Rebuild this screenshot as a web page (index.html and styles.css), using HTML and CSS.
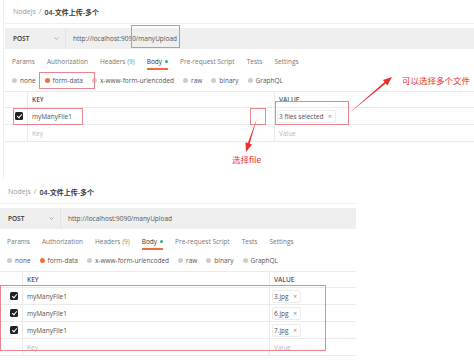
FILE: index.html
```html
<!DOCTYPE html>
<html lang="zh-CN">
<head>
    <meta charset="UTF-8">
    <meta name="viewport" content="width=device-width, initial-scale=1.0">
    <title>04-文件上传-多个</title>
    <link rel="stylesheet" href="styles.css">
</head>
<body>
    <section class="shot shot-first">
        <div class="crumb">
            <span class="crumb-parent">Nodejs</span>
            <span class="crumb-sep">/</span>
            <span class="crumb-name">04-文件上传-多个</span>
        </div>
        <div class="request">
            <div class="method">
                <span>POST</span>
                <svg class="caret" width="5" height="3" viewBox="0 0 5 3"><polyline points="0.5,0.5 2.5,2.5 4.5,0.5" fill="none" stroke="#999" stroke-width="0.8"/></svg>
            </div>
            <div class="url">http://localhost:9090/manyUpload</div>
        </div>
        <nav class="tabs">
            <span class="tab">Params</span>
            <span class="tab">Authorization</span>
            <span class="tab">Headers <span class="count">(9)</span></span>
            <span class="tab tab-active">Body<i class="dot"></i></span>
            <span class="tab">Pre-request Script</span>
            <span class="tab">Tests</span>
            <span class="tab">Settings</span>
        </nav>
        <div class="modes">
            <span class="mode">none</span>
            <span class="mode mode-on">form-data</span>
            <span class="mode">x-www-form-urlencoded</span>
            <span class="mode">raw</span>
            <span class="mode">binary</span>
            <span class="mode">GraphQL</span>
        </div>
        <div class="kv">
            <div class="kv-row kv-head">
                <span class="cell cell-check"></span>
                <span class="cell">KEY</span>
                <span class="cell">VALUE</span>
            </div>
            <div class="kv-row">
                <span class="cell cell-check"><i class="check"></i></span>
                <span class="cell">myManyFile1</span>
                <span class="cell"><span class="chip">3 files selected <b>×</b></span></span>
            </div>
            <div class="kv-row">
                <span class="cell cell-check"></span>
                <span class="cell hint">Key</span>
                <span class="cell hint">Value</span>
            </div>
        </div>
    </section>

    <section class="shot shot-second">
        <div class="crumb">
            <span class="crumb-parent">Nodejs</span>
            <span class="crumb-sep">/</span>
            <span class="crumb-name">04-文件上传-多个</span>
        </div>
        <div class="request">
            <div class="method">
                <span>POST</span>
                <svg class="caret" width="5" height="3" viewBox="0 0 5 3"><polyline points="0.5,0.5 2.5,2.5 4.5,0.5" fill="none" stroke="#999" stroke-width="0.8"/></svg>
            </div>
            <div class="url">http://localhost:9090/manyUpload</div>
        </div>
        <nav class="tabs">
            <span class="tab">Params</span>
            <span class="tab">Authorization</span>
            <span class="tab">Headers <span class="count">(9)</span></span>
            <span class="tab tab-active">Body<i class="dot"></i></span>
            <span class="tab">Pre-request Script</span>
            <span class="tab">Tests</span>
            <span class="tab">Settings</span>
        </nav>
        <div class="modes">
            <span class="mode">none</span>
            <span class="mode mode-on">form-data</span>
            <span class="mode">x-www-form-urlencoded</span>
            <span class="mode">raw</span>
            <span class="mode">binary</span>
            <span class="mode">GraphQL</span>
        </div>
        <div class="kv">
            <div class="kv-row kv-head">
                <span class="cell cell-check"></span>
                <span class="cell">KEY</span>
                <span class="cell">VALUE</span>
            </div>
            <div class="kv-row">
                <span class="cell cell-check"><i class="check"></i></span>
                <span class="cell">myManyFile1</span>
                <span class="cell"><span class="chip">3.jpg <b>×</b></span></span>
            </div>
            <div class="kv-row">
                <span class="cell cell-check"><i class="check"></i></span>
                <span class="cell">myManyFile1</span>
                <span class="cell"><span class="chip">6.jpg <b>×</b></span></span>
            </div>
            <div class="kv-row">
                <span class="cell cell-check"><i class="check"></i></span>
                <span class="cell">myManyFile1</span>
                <span class="cell"><span class="chip">7.jpg <b>×</b></span></span>
            </div>
            <div class="kv-row">
                <span class="cell cell-check"></span>
                <span class="cell hint">Key</span>
                <span class="cell hint">Value</span>
            </div>
        </div>
    </section>

    <!-- annotations drawn over the screenshots -->
    <svg class="marks" width="474" height="361" viewBox="0 0 474 361">
        <g fill="none" stroke="#e9868d" stroke-width="1">
            <rect x="131.5" y="25.5" width="48" height="22"/>
            <rect x="39.5" y="72.5" width="55" height="16"/>
            <rect x="13.5" y="108.5" width="69" height="16"/>
            <rect x="250.5" y="108.5" width="15" height="16"/>
            <rect x="275.5" y="101.5" width="73" height="23"/>
            <rect x="0.5" y="285.5" width="325" height="65"/>
        </g>
        <g fill="#e8302f">
            <polygon points="348,114 385.7,83.5 387.4,85.5 392,77 382.9,80.1 384.5,82.1"/>
            <polygon points="257,118 249.6,143.7 252.1,144.5 246,152 245.5,142.3 247.9,143.1"/>
        </g>
    </svg>
    <div class="note note-many">可以选择多个文件</div>
    <div class="note note-file">选择file</div>
</body>
</html>
```

FILE: styles.css
```css
body {
    margin: 0;
    width: 474px;
    height: 361px;
    position: relative;
    overflow: hidden;
    background: #fff;
    font-family: "Open Sans", "Noto Sans CJK SC", sans-serif;
    font-size: 6.5px;
    color: #505050;
}

.shot {
    height: 180px;
    box-sizing: border-box;
}

.shot-first {
    margin-left: 3px;
    padding-left: 1px;
    border-left: 1px solid #f0f0f0;
}

.shot-second {
    width: 356px;
}

.crumb {
    height: 23px;
    display: flex;
    align-items: center;
    gap: 3px;
    padding-left: 8px;
    border-bottom: 1px solid #f0f0f0;
    font-size: 7px;
}

.crumb-parent,
.crumb-sep {
    color: #999;
}

.crumb-name {
    color: #333;
    font-weight: 600;
}

.request {
    margin-top: 4px;
    height: 21px;
    display: flex;
    align-items: center;
    background: #efefef;
}

.method {
    width: 61px;
    height: 100%;
    display: flex;
    align-items: center;
    justify-content: space-between;
    padding: 0 6px 0 8px;
    box-sizing: border-box;
    border-right: 1px solid #e4e4e4;
    color: #333;
    font-weight: 600;
}

.url {
    padding-left: 7px;
    color: #555;
}

.tabs {
    height: 21px;
    display: flex;
    gap: 12px;
    padding: 7px 0 0 7px;
    box-sizing: border-box;
    color: #777;
}

.tab {
    line-height: 12px;
    border-bottom: 2px solid transparent;
}

.tab-active {
    color: #333;
    border-bottom-color: #f26b3a;
}

.count {
    color: #5aa57d;
}

.dot {
    display: inline-block;
    width: 3px;
    height: 3px;
    margin-left: 3px;
    vertical-align: 1px;
    border-radius: 50%;
    background: #26b47f;
}

.modes {
    height: 16px;
    margin-top: 2px;
    display: flex;
    align-items: center;
    gap: 9px;
    padding-left: 7px;
    color: #555;
}

.mode {
    display: flex;
    align-items: center;
    gap: 3px;
}

.mode::before {
    content: "";
    width: 5px;
    height: 5px;
    border-radius: 50%;
    background: #cdcdcd;
}

.mode-on::before {
    background: #f0703f;
}

.kv {
    margin-top: 3px;
    border-top: 1px solid #ebebeb;
}

.kv-row {
    height: 17px;
    display: grid;
    grid-template-columns: 22px 247px 1fr;
    box-sizing: border-box;
    border-bottom: 1px solid #ebebeb;
}

.kv-head {
    height: 16px;
    color: #555;
    font-weight: 600;
}

.cell {
    display: flex;
    align-items: center;
    padding-left: 4px;
    border-left: 1px solid #ebebeb;
}

.cell-check {
    padding-left: 10px;
    border-left: none;
}

.check {
    width: 8px;
    height: 8px;
    border-radius: 1.5px;
    background: #222;
    position: relative;
}

.check::after {
    content: "";
    position: absolute;
    left: 2.6px;
    top: 1px;
    width: 2px;
    height: 4px;
    border: solid #fff;
    border-width: 0 1.2px 1.2px 0;
    transform: rotate(40deg);
}

.hint {
    color: #b8b8b8;
}

.chip {
    padding: 1px 3px 1px 1px;
    margin-left: -2px;
    border: 1px solid #ececec;
    border-radius: 2px;
}

.chip b {
    margin-left: 3px;
    font-weight: 400;
    color: #888;
}

.marks {
    position: absolute;
    top: 0;
    left: 0;
    pointer-events: none;
}

.note {
    position: absolute;
    color: #ec2f2f;
    font-size: 8.5px;
    line-height: 12px;
    font-family: "Noto Sans CJK SC", sans-serif;
}

.note-many {
    left: 402px;
    top: 74px;
}

.note-file {
    left: 232px;
    top: 153px;
}
```
